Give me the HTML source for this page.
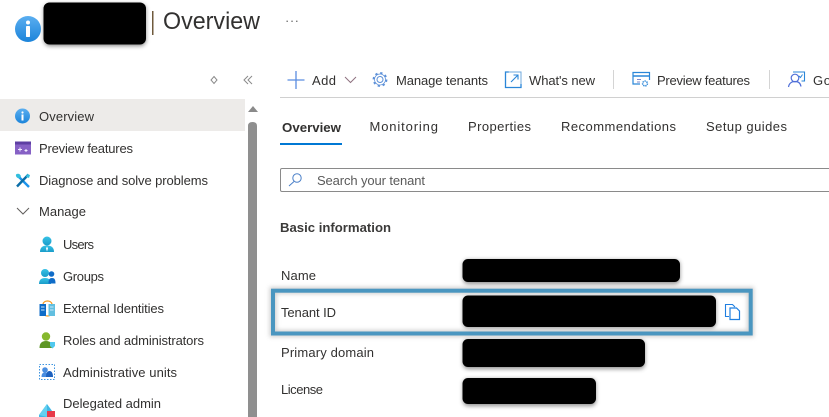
<!DOCTYPE html>
<html lang="en"><head><meta charset="utf-8"><title>Overview</title>
<style>
html,body{margin:0;padding:0;background:#fff;width:829px;height:417px;overflow:hidden}
svg{display:block}
text{font-family:"Liberation Sans",sans-serif;font-size:13px;fill:#323130}
</style></head><body>
<svg width="829" height="417" viewBox="0 0 829 417" xmlns="http://www.w3.org/2000/svg">
<defs>
<linearGradient id="b" x1="0" y1="0" x2="0" y2="1"><stop offset="0" stop-color="#5aaef0"/><stop offset="1" stop-color="#1c84da"/></linearGradient>
<linearGradient id="c" x1="0" y1="0" x2="0" y2="1"><stop offset="0" stop-color="#37c2e6"/><stop offset="1" stop-color="#1a9cc9"/></linearGradient>
<filter id="s" x="-10%" y="-30%" width="120%" height="170%"><feGaussianBlur stdDeviation="2"/></filter>
</defs>
<rect width="829" height="417" fill="#fff"/>

<!-- header -->
<circle cx="28" cy="29" r="13" fill="url(#b)"/>
<circle cx="28" cy="22.500" r="2" fill="#fff"/><rect x="26" y="26" width="4" height="11" rx=".8" fill="#fff"/>
<rect x="44" y="4" width="102" height="42" rx="6" fill="#555" filter="url(#s)" opacity=".7"/>
<rect x="43.500" y="2.500" width="102.500" height="42" rx="6" fill="#000"/>
<rect x="152" y="11" width="1.500" height="24" fill="#6f5a3c"/>
<text x="163" y="29" textLength="97" lengthAdjust="spacingAndGlyphs" style="font-size:24px">Overview</text>
<text x="285" y="25" style="font-size:13px;fill:#666" textLength="14">···</text>

<!-- sidebar controls -->
<path d="M214 76.500l3 3.500-3 3.500-3-3.500z" fill="none" stroke="#8a8a8a"/>
<path d="M248 76l-4 4 4 4M252 76l-4 4 4 4" fill="none" stroke="#8a8a8a"/>

<!-- sidebar -->
<rect x="0" y="99" width="245" height="32" fill="#edebe9"/>
<path d="M253 106l5 6h-10z" fill="#8a8a8a"/>
<path d="M248 417V126q0-4 4.500-4t4.500 4v291z" fill="#8f8f8f"/>

<circle cx="22.500" cy="116" r="7.500" fill="url(#b)"/>
<circle cx="22.500" cy="112.500" r="1.100" fill="#fff"/><rect x="21.500" y="114.500" width="2" height="6" fill="#fff"/>
<text x="39" y="121" textLength="55">Overview</text>

<rect x="15" y="141.500" width="16" height="13" fill="#8661c5"/><rect x="15" y="141.500" width="16" height="3" fill="#5e3fa3"/>
<path d="M20 147.500v4M18 149.500h4M26 149v3M24.500 150.500h3" stroke="#f0eaff" stroke-width="1"/>
<text x="39" y="153" textLength="94">Preview features</text>

<path d="M17 175l12 12" stroke="#1b93eb" stroke-width="2.400"/>
<path d="M28.500 174.500l-11.500 12" stroke="#0a6ea8" stroke-width="2.400"/>
<path d="M16 174.500c2-1.500 4.500-.5 5 2l-2 2c-2-.5-3.500-2-3-4z" fill="#32bedd"/>
<path d="M27 174l3 1-1 3-3-1z" fill="#32bedd"/>
<text x="39" y="185" textLength="169">Diagnose and solve problems</text>

<path d="M17 208l6 6 6-6" fill="none" stroke="#605e5c" stroke-width="1"/>
<text x="39" y="216" textLength="47">Manage</text>

<!-- users -->
<circle cx="47" cy="241" r="4.500" fill="url(#c)"/>
<path d="M40 252c0-4.500 2.500-6.500 7-6.500s7 2 7 6.500z" fill="url(#c)"/>
<path d="M47 246.500l-1 2 1 3 1-3z" fill="#fff"/>
<text x="63" y="249" textLength="31">Users</text>

<!-- groups -->
<circle cx="45" cy="273" r="4" fill="url(#c)"/>
<path d="M39 284c0-4 2-6 6-6s6 2 6 6z" fill="url(#c)"/>
<circle cx="51.500" cy="274" r="2.800" fill="#0f6cc8"/>
<path d="M48.500 283.500c0-4 1-5.500 3.500-5.500s3.500 1.500 3.500 5.500z" fill="#0f6cc8"/>
<text x="63" y="281" textLength="41">Groups</text>

<!-- external identities -->
<path d="M43 304c1-4 8-4 9 0M43 313c1 4 8 4 9 0" fill="none" stroke="#f59a23" stroke-width="1.300"/>
<rect x="39.500" y="304" width="6.500" height="12" fill="#0f6cc8"/>
<rect x="48.500" y="304" width="6.500" height="12" fill="#62bfe0"/>
<path d="M41 307h3.500M41 310h3.500M50 307h3.500M50 310h3.500" stroke="#cfe7f8" stroke-width="1"/>
<text x="63" y="313" textLength="101">External Identities</text>

<!-- roles -->
<circle cx="46" cy="336.500" r="4.200" fill="#86b82e"/>
<path d="M39.500 348c0-4.500 2-7 6.500-7s6.500 2.500 6.500 7z" fill="#5e9624"/>
<path d="M50 342h5v4l-2.500 2.500-2.500-2.500z" fill="#50c8ee"/>
<text x="63" y="345" textLength="141">Roles and administrators</text>

<!-- admin units -->
<rect x="39.500" y="364.500" width="15" height="15" fill="none" stroke="#3f95e0" stroke-dasharray="1.500 1.500"/>
<circle cx="45" cy="370" r="2.800" fill="#4a8ee0"/>
<path d="M41.500 377c0-3 1-4.500 3.500-4.500s3.500 1.500 3.500 4.500z" fill="#4a8ee0"/>
<path d="M46 377c0-3.500 1-6 3.500-6s3.500 2.500 3.500 6z" fill="#1e62bf"/>
<text x="63" y="377" textLength="114">Administrative units</text>

<!-- delegated -->
<path d="M47 404l8 11-8 2h-8v-2z" fill="#3fb8e6"/>
<path d="M47 404l-8 11 8 2z" fill="#63d0f0"/>
<rect x="47" y="411" width="8" height="6" fill="#e8394a"/>
<text x="63" y="408" textLength="98">Delegated admin</text>
<text x="63" y="426" textLength="52">partners</text>

<!-- command bar -->
<path d="M296 71v18M287.500 80h17" stroke="#5b8de0" stroke-width="1.300"/>
<text x="312" y="85" textLength="24">Add</text>
<path d="M345 77l5.500 5.500 5.500-5.500" fill="none" stroke="#8f7280" stroke-width="1"/>
<g transform="translate(380 79.500)" fill="none" stroke="#5c90d8">
<circle r="3"/>
<circle r="6.500" stroke-width="1.800" stroke-dasharray="2.300 2.800"/>
<circle r="5.500" stroke-width=".7"/>
</g>
<text x="396" y="85" textLength="92">Manage tenants</text>
<path d="M509 72h-3.500v15.500h15.500V84" fill="none" stroke="#2a86d8" stroke-width="1.300"/>
<path d="M508.500 72h12.500v12" fill="none" stroke="#6fa8dc" stroke-width="1"/>
<path d="M511 82l7-7M513.500 75h4.500v4.500" fill="none" stroke="#2a86d8" stroke-width="1.100"/>
<text x="529" y="85" textLength="66">What's new</text>
<rect x="613" y="70" width="1" height="19" fill="#d4d4d4"/>
<path d="M640 84h-7V72.500h16.500V80" fill="none" stroke="#2a86d8" stroke-width="1.200"/>
<path d="M633 76h16.500" stroke="#2a86d8" stroke-width="1.500"/>
<path d="M637 79.500h4M637 82h3" stroke="#7c89cc"/>
<circle cx="645" cy="83.500" r="2.400" fill="none" stroke="#2a86d8" stroke-width="1.500" stroke-dasharray="1.300 .8"/>
<text x="657" y="85" textLength="93">Preview features</text>
<rect x="769" y="70" width="1" height="19" fill="#d4d4d4"/>
<circle cx="795" cy="78" r="3.800" fill="none" stroke="#4f6fd8" stroke-width="1.200"/>
<path d="M788.500 87c.5-3.500 3-5.500 6.500-5.500s5.500 2 6 5" fill="none" stroke="#4f6fd8" stroke-width="1.200"/>
<path d="M793 72h11.500v9h-3" fill="none" stroke="#2a86d8" stroke-width="1.100"/>
<path d="M799 76l1.500 1.500 2-3" fill="none" stroke="#2a86d8"/>
<text x="813" y="85" textLength="18">Go</text>
<rect x="280" y="97" width="549" height="1" fill="#d0d0d0"/>

<!-- tabs -->
<text x="282" y="132" textLength="59" style="font-weight:bold;fill:#323130" lengthAdjust="spacingAndGlyphs">Overview</text>
<rect x="280" y="143" width="62" height="2" fill="#0078d4"/>
<text x="369.500" y="131" textLength="68.500">Monitoring</text>
<text x="468" y="131" textLength="63">Properties</text>
<text x="561" y="131" textLength="115">Recommendations</text>
<text x="706" y="131" textLength="81">Setup guides</text>

<!-- search -->
<rect x="280.500" y="168.500" width="560" height="23" rx="1.500" fill="#fff" stroke="#8a8a8a"/>
<circle cx="297" cy="178" r="4.200" fill="none" stroke="#4a7fc8"/>
<path d="M294 181.500l-5 4.500" stroke="#4a7fc8"/>
<text x="317" y="185" textLength="108" style="fill:#5a5a5a">Search your tenant</text>

<text x="280" y="232" textLength="111" lengthAdjust="spacingAndGlyphs" style="font-weight:bold;fill:#3b3a39">Basic information</text>

<!-- highlight -->
<rect x="273" y="290.500" width="477.500" height="43" fill="none" stroke="#aaa" stroke-width="7" filter="url(#s)" opacity=".55"/>
<rect x="273" y="290.700" width="477.700" height="42.800" fill="none" stroke="#4a96c0" stroke-width="4"/>

<!-- rows -->
<text x="281" y="280" textLength="35">Name</text>
<text x="281" y="317" textLength="55">Tenant ID</text>
<text x="281" y="357" textLength="93">Primary domain</text>
<text x="281" y="394" textLength="42">License</text>

<g fill="#444" filter="url(#s)" opacity=".6">
<rect x="463" y="260" width="217" height="24" rx="5"/>
<rect x="463" y="297" width="253" height="31" rx="5"/>
<rect x="463" y="340" width="182" height="29" rx="5"/>
<rect x="463" y="379" width="133" height="27" rx="5"/>
</g>
<rect x="462.500" y="259" width="217.500" height="23" rx="5.500" fill="#000"/>
<rect x="462.500" y="295.500" width="253.500" height="31.500" rx="5.500" fill="#000"/>
<rect x="462.500" y="339" width="182.500" height="28" rx="5.500" fill="#000"/>
<rect x="462.500" y="378" width="133.500" height="26" rx="5.500" fill="#000"/>

<!-- copy -->
<path d="M729 316.500h-3.500V304.500h7l2.500 2.500" fill="#fff" stroke="#1f7fe0" stroke-width="1.100"/>
<path d="M730 308h6.500l3 3v8.500H730z" fill="#fff" stroke="#1f7fe0" stroke-width="1.200"/>
</svg>
</body></html>
